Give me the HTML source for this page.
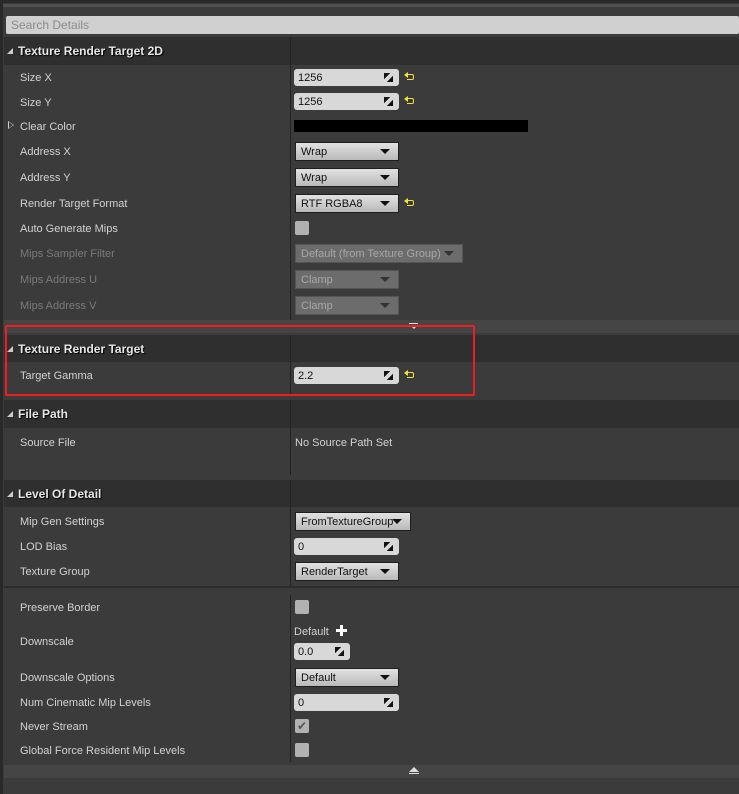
<!DOCTYPE html>
<html><head><style>
*{margin:0;padding:0;box-sizing:border-box}
body{width:739px;height:794px;background:#3b3b3b;position:relative;overflow:hidden;font-family:"Liberation Sans",sans-serif;font-size:11px;color:#d4d4d4}
.a{position:absolute}
.hdr{position:absolute;left:4px;right:0;background:#2f2f2f}
.ht{position:absolute;left:18px;font-weight:bold;font-size:12px;color:#e6e6e6;text-shadow:1px 1px 1px #000}
.tri{position:absolute;left:7px;width:0;height:0;border-left:6px solid transparent;border-bottom:6px solid #ccc}
.lbl{position:absolute;left:20px;color:#d2d2d2}
.dis{color:#7a7a7a}
.inp{position:absolute;left:294px;width:105px;height:17px;background:#d8d8d8;border-radius:3px;color:#111;padding-left:4px;line-height:18px}
.inp:after{content:"";position:absolute;right:6px;top:4px;width:9px;height:9px;background:linear-gradient(135deg,#111 0 35%,transparent 35% 65%,#111 65%)}
.dd{position:absolute;left:295px;width:104px;height:19px;background:linear-gradient(#e2e2e2,#b9b9b9);border:1px solid #1e1e1e;color:#111;padding-left:5px;line-height:19px}
.dd:after{content:"";position:absolute;right:8px;top:6px;border-left:5px solid transparent;border-right:5px solid transparent;border-top:5px solid #111}
.dd.d{background:#6c6c6c;color:#a8a8a8;border-color:#555}
.dd.d:after{border-top-color:#333}
.cb{position:absolute;left:295px;width:14px;height:14px;background:#b1b1b1;border-radius:2px}
.rv{position:absolute;left:407px;width:7px;height:6px;border:1.5px solid #f0e23a;border-left:none;border-radius:0 2px 2px 0}
.rv:before{content:"";position:absolute;left:-3px;top:-3px;width:0;height:0;border-top:3px solid transparent;border-bottom:3px solid transparent;border-right:4px solid #f0e23a}
.col{position:absolute;left:290px;width:1px;background:#222}
.bar{position:absolute;left:4px;right:0;background:#454545}
</style></head><body>
<div class="a" style="left:0;top:0;width:739px;height:3px;background:#2a2a2a"></div>
<div class="a" style="left:0;top:4px;width:739px;height:3px;background:#505050"></div>
<div class="a" style="left:0;top:0;width:3px;height:794px;background:#292929"></div>
<div class="a" style="left:6px;top:16px;width:733px;height:18px;background:#d0d0d0;border-radius:2px;color:#8c8c8c;font-size:12px;padding-left:5px;line-height:18px">Search Details</div>

<div class="hdr" style="top:37px;height:28px"><div class="tri" style="top:11px;left:3px"></div><div class="ht" style="left:14px;top:7px">Texture Render Target 2D</div></div>
<div class="col" style="top:37px;height:283px"></div>
<div class="lbl" style="top:72px">Size X</div><div class="inp" style="top:69px">1256</div><div class="rv" style="top:74px"></div>
<div class="lbl" style="top:97px">Size Y</div><div class="inp" style="top:93px">1256</div><div class="rv" style="top:98px"></div>
<div class="a" style="left:8px;top:121px;border-top:4px solid transparent;border-bottom:4px solid transparent;border-left:6px solid #ccc"></div><div class="a" style="left:9px;top:122px;border-top:3px solid transparent;border-bottom:3px solid transparent;border-left:4px solid #3b3b3b"></div>
<div class="lbl" style="top:121px">Clear Color</div><div class="a" style="left:294px;top:120px;width:234px;height:12px;background:#000"></div>
<div class="lbl" style="top:146px">Address X</div><div class="dd" style="top:142px">Wrap</div>
<div class="lbl" style="top:172px">Address Y</div><div class="dd" style="top:168px">Wrap</div>
<div class="lbl" style="top:198px">Render Target Format</div><div class="dd" style="top:194px">RTF RGBA8</div><div class="rv" style="top:200px"></div>
<div class="lbl" style="top:223px">Auto Generate Mips</div><div class="cb" style="top:221px"></div>
<div class="lbl dis" style="top:248px">Mips Sampler Filter</div><div class="dd d" style="top:244px;width:168px">Default (from Texture Group)</div>
<div class="lbl dis" style="top:274px">Mips Address U</div><div class="dd d" style="top:270px">Clamp</div>
<div class="lbl dis" style="top:300px">Mips Address V</div><div class="dd d" style="top:296px">Clamp</div>
<div class="bar" style="top:320px;height:13px"></div>
<div class="a" style="left:409px;top:323px;width:9px;height:1px;background:#ddd"></div><div class="a" style="left:410px;top:325px;border-left:4px solid transparent;border-right:4px solid transparent;border-top:4px solid #ddd"></div>

<div class="hdr" style="top:335px;height:27px"><div class="tri" style="top:11px;left:3px"></div><div class="ht" style="left:14px;top:7px">Texture Render Target</div></div>
<div class="col" style="top:335px;height:60px"></div>
<div class="lbl" style="top:370px">Target Gamma</div><div class="inp" style="top:367px">2.2</div><div class="rv" style="top:372px"></div>
<div class="a" style="left:5px;top:325px;width:470px;height:71px;border:2px solid #f01e1e;border-radius:2px"></div>

<div class="hdr" style="top:400px;height:28px"><div class="tri" style="top:11px;left:3px"></div><div class="ht" style="left:14px;top:7px">File Path</div></div>
<div class="col" style="top:400px;height:75px"></div>
<div class="lbl" style="top:437px">Source File</div><div class="a" style="left:295px;top:437px;color:#d2d2d2">No Source Path Set</div>

<div class="hdr" style="top:480px;height:27px"><div class="tri" style="top:11px;left:3px"></div><div class="ht" style="left:14px;top:7px">Level Of Detail</div></div>
<div class="col" style="top:480px;height:107px"></div>
<div class="lbl" style="top:516px">Mip Gen Settings</div><div class="dd" style="top:512px;width:116px">FromTextureGroup</div>
<div class="lbl" style="top:541px">LOD Bias</div><div class="inp" style="top:538px">0</div>
<div class="lbl" style="top:566px">Texture Group</div><div class="dd" style="top:562px">RenderTarget</div>
<div class="a" style="left:4px;top:586px;width:735px;height:2px;background:#2c2c2c"></div>
<div class="col" style="top:595px;height:167px"></div>
<div class="lbl" style="top:602px">Preserve Border</div><div class="cb" style="top:600px"></div>
<div class="lbl" style="top:636px">Downscale</div><div class="a" style="left:294px;top:626px;color:#d2d2d2">Default</div>
<div class="a" style="left:336px;top:629px;width:11px;height:3px;background:#fff"></div><div class="a" style="left:340px;top:625px;width:3px;height:11px;background:#fff"></div>
<div class="inp" style="top:643px;width:56px">0.0</div>
<div class="lbl" style="top:672px">Downscale Options</div><div class="dd" style="top:668px">Default</div>
<div class="lbl" style="top:697px">Num Cinematic Mip Levels</div><div class="inp" style="top:694px">0</div>
<div class="lbl" style="top:721px">Never Stream</div><div class="cb" style="top:719px;color:#555;font-size:12px;line-height:14px;text-align:center">✔</div>
<div class="lbl" style="top:745px">Global Force Resident Mip Levels</div><div class="cb" style="top:743px"></div>
<div class="bar" style="top:765px;height:13px"></div>
<div class="a" style="left:409px;top:767px;border-left:5px solid transparent;border-right:5px solid transparent;border-bottom:5px solid #ddd"></div><div class="a" style="left:409px;top:773px;width:10px;height:1px;background:#ddd"></div>
</body></html>
